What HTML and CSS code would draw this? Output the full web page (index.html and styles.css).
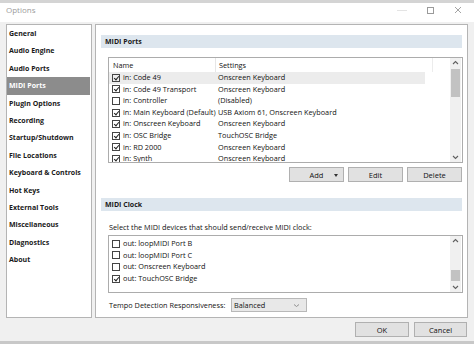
FILE: index.html
```html
<!DOCTYPE html>
<html>
  <head>
    <title>Options</title>
    <meta charset="utf-8">
    <link rel="stylesheet" href="styles.css">
  </head>
  <body>
    <div class="window">
      <div class="titlebar">
        <span class="title">Options</span>
        <div class="controls">
          <svg class="ctl" width="10" height="10" viewBox="0 0 10 10"><line x1="0" y1="5.5" x2="10" y2="5.5" stroke="#e4e4e4" stroke-width="1"/></svg>
          <svg class="ctl" width="10" height="10" viewBox="0 0 10 10"><rect x="2.5" y="2.5" width="6" height="6" fill="none" stroke="#9a9a9a" stroke-width="1"/></svg>
          <svg class="ctl" width="10" height="10" viewBox="0 0 10 10"><path d="M2 2 L8 8 M8 2 L2 8" stroke="#9a9a9a" stroke-width="0.9"/></svg>
        </div>
      </div>

      <div class="main">
        <ul class="nav">
          <li>General</li>
          <li>Audio Engine</li>
          <li>Audio Ports</li>
          <li class="active">MIDI Ports</li>
          <li>Plugin Options</li>
          <li>Recording</li>
          <li>Startup/Shutdown</li>
          <li>File Locations</li>
          <li>Keyboard &amp; Controls</li>
          <li>Hot Keys</li>
          <li>External Tools</li>
          <li>Miscellaneous</li>
          <li>Diagnostics</li>
          <li>About</li>
        </ul>

        <div class="content">
          <div class="band">MIDI Ports</div>

          <div class="listbox ports">
            <div class="rows">
              <div class="list-head">
                <span class="col-name">Name</span>
                <span class="col-set">Settings</span>
                <span class="col-fill"></span>
              </div>
              <div class="row hover"><span class="col-name"><span class="cb on"></span>in: Code 49</span><span class="col-set">Onscreen Keyboard</span></div>
              <div class="row"><span class="col-name"><span class="cb on"></span>in: Code 49 Transport</span><span class="col-set">Onscreen Keyboard</span></div>
              <div class="row"><span class="col-name"><span class="cb"></span>in: Controller</span><span class="col-set">(Disabled)</span></div>
              <div class="row"><span class="col-name"><span class="cb on"></span>in: Main Keyboard (Default)</span><span class="col-set">USB Axiom 61, Onscreen Keyboard</span></div>
              <div class="row"><span class="col-name"><span class="cb on"></span>in: Onscreen Keyboard</span><span class="col-set">Onscreen Keyboard</span></div>
              <div class="row"><span class="col-name"><span class="cb on"></span>in: OSC Bridge</span><span class="col-set">TouchOSC Bridge</span></div>
              <div class="row"><span class="col-name"><span class="cb on"></span>in: RD 2000</span><span class="col-set">Onscreen Keyboard</span></div>
              <div class="row"><span class="col-name"><span class="cb on"></span>in: Synth</span><span class="col-set">Onscreen Keyboard</span></div>
            </div>
            <div class="vscroll">
              <svg class="arrow" width="11" height="10" viewBox="0 0 11 10"><polyline points="3,6 5.5,3.5 8,6" fill="none" stroke="#606060" stroke-width="1.1"/></svg>
              <div class="track"><div class="thumb ports-thumb"></div></div>
              <svg class="arrow" width="11" height="10" viewBox="0 0 11 10"><polyline points="3,4 5.5,6.5 8,4" fill="none" stroke="#606060" stroke-width="1.1"/></svg>
            </div>
          </div>

          <div class="buttons">
            <button class="btn add">Add <span class="caret"></span></button>
            <button class="btn">Edit</button>
            <button class="btn">Delete</button>
          </div>

          <div class="band clock-band">MIDI Clock</div>
          <p class="hint">Select the MIDI devices that should send/receive MIDI clock:</p>

          <div class="listbox clock">
            <div class="rows">
              <div class="row"><span class="col-name wide"><span class="cb"></span>out: loopMIDI Port B</span></div>
              <div class="row"><span class="col-name wide"><span class="cb"></span>out: loopMIDI Port C</span></div>
              <div class="row"><span class="col-name wide"><span class="cb"></span>out: Onscreen Keyboard</span></div>
              <div class="row"><span class="col-name wide"><span class="cb on"></span>out: TouchOSC Bridge</span></div>
            </div>
            <div class="vscroll">
              <svg class="arrow" width="11" height="10" viewBox="0 0 11 10"><polyline points="3,6 5.5,3.5 8,6" fill="none" stroke="#606060" stroke-width="1.1"/></svg>
              <div class="track"><div class="thumb clock-thumb"></div></div>
              <svg class="arrow" width="11" height="10" viewBox="0 0 11 10"><polyline points="3,4 5.5,6.5 8,4" fill="none" stroke="#606060" stroke-width="1.1"/></svg>
            </div>
          </div>

          <div class="tempo">
            <span class="tempo-label">Tempo Detection Responsiveness:</span>
            <div class="select">
              <span>Balanced</span>
              <svg width="7" height="5" viewBox="0 0 7 5"><polyline points="1,1.5 3.5,3.5 6,1.5" fill="none" stroke="#888" stroke-width="0.9"/></svg>
            </div>
          </div>
        </div>
      </div>

      <div class="footer">
        <button class="btn ok">OK</button>
        <button class="btn cancel">Cancel</button>
      </div>
      <div class="bottomstrip"></div>
    </div>
  </body>
</html>
```

FILE: styles.css
```css
body {
  margin: 0;
  background: #f0f0f0;
  color: #111;
  font: 7.3px/1.2 'Open Sans', sans-serif;
}

.window {
  width: 474px;
  height: 344px;
  display: flex;
  flex-direction: column;
  background: #f0f0f0;
  overflow: hidden;
}

.titlebar {
  height: 22px;
  box-sizing: border-box;
  border-top: 3px solid #d4d4d4;
  background: #fff;
  display: flex;
  align-items: flex-start;
  padding: 1px 0 0 6px;
  line-height: 12px;
}

.title {
  color: #9c9c9c;
  font-size: 8px;
}

.controls {
  margin-left: auto;
  display: flex;
  gap: 18px;
  padding-right: 11px;
  margin-top: 1px;
}

.main {
  display: flex;
  gap: 3px;
  margin-top: 2px;
  height: 294px;
  padding: 0 6px;
}

.nav {
  list-style: none;
  margin: 0;
  padding: 0;
  width: 86px;
  box-sizing: border-box;
  border: 1px solid #b4b4b4;
  background: #fff;
}

.nav li {
  height: 17.4px;
  line-height: 17.4px;
  padding-left: 2px;
  margin-right: 1px;
  font-size: 7px;
  font-weight: bold;
  color: #1a1a1a;
  white-space: nowrap;
}

.nav li.active {
  background: #8c8c8c;
  color: #fff;
}

.content {
  flex: 1;
  box-sizing: border-box;
  border: 1px solid #b4b4b4;
  background: #fff;
  padding: 10px 5px 0 5px;
}

.band {
  height: 13px;
  line-height: 13px;
  background: #dde6ee;
  font-size: 7px;
  font-weight: bold;
  color: #1a1a1a;
  padding-left: 4px;
}

.listbox {
  display: flex;
  border: 1px solid #acacac;
  margin: 0 -1px 0 7px;
  box-sizing: border-box;
}

.listbox.ports {
  margin-top: 9px;
  height: 106px;
  overflow: hidden;
}

.rows {
  flex: 1;
  overflow: hidden;
}

.list-head {
  display: flex;
  height: 14px;
  line-height: 14px;
}

.list-head .col-set {
  border-left: 1px solid #e6e6e6;
}

.list-head .col-fill {
  width: 7px;
  border-right: 1px solid #ececec;
}

.row {
  display: flex;
  width: 316px;
  height: 11.6px;
  line-height: 11.6px;
  white-space: nowrap;
}

.row.hover {
  background: #ececec;
}

.col-name {
  width: 106px;
  display: flex;
  align-items: center;
  padding-left: 3px;
  box-sizing: border-box;
}

.list-head .col-name {
  padding-left: 4px;
}

.col-name.wide {
  width: 300px;
}

.col-set {
  width: 210px;
  padding-left: 3px;
  box-sizing: border-box;
}

.cb {
  width: 8px;
  height: 8px;
  box-sizing: border-box;
  border: 1px solid #444;
  margin-right: 3px;
  flex: none;
  position: relative;
}

.cb.on::after {
  content: "";
  position: absolute;
  left: 1.5px;
  top: 0;
  width: 2px;
  height: 4px;
  border: solid #222;
  border-width: 0 1px 1px 0;
  transform: rotate(40deg);
}

.vscroll {
  width: 11px;
  display: flex;
  flex-direction: column;
  background: #f0f0f0;
  margin-right: 1px;
}

.arrow {
  flex: none;
}

.track {
  flex: 1;
}

.thumb {
  background: #c2c2c2;
  margin: 0 1px;
}

.ports-thumb {
  margin-top: 1px;
  height: 28px;
}

.clock-thumb {
  margin-top: 24px;
  height: 11px;
}

.buttons {
  display: flex;
  justify-content: flex-end;
  gap: 4px;
  margin-top: 4px;
}

.btn {
  height: 15px;
  width: 55px;
  background: #e1e1e1;
  border: 1px solid #b0b0b0;
  font: 7.5px 'Open Sans', sans-serif;
  color: #111;
  padding: 0;
}

.btn.add {
  position: relative;
}

.caret {
  position: absolute;
  left: 44px;
  top: 6px;
  width: 0;
  height: 0;
  border-left: 2.5px solid transparent;
  border-right: 2.5px solid transparent;
  border-top: 3px solid #333;
}

.clock-band {
  margin-top: 16px;
}

.hint {
  margin: 10px 0 0 8px;
  line-height: 12px;
}

.listbox.clock {
  margin-top: 2px;
  height: 58px;
}

.listbox.clock .rows {
  padding-top: 2px;
}

.tempo {
  display: flex;
  align-items: center;
  margin-top: 5px;
}

.tempo-label {
  width: 122px;
  padding-left: 8px;
}

.select {
  width: 76px;
  height: 14px;
  box-sizing: border-box;
  border: 1px solid #b8b8b8;
  background: #e8e8e8;
  display: flex;
  align-items: center;
  justify-content: space-between;
  padding: 0 6px 0 2px;
}

.footer {
  display: flex;
  justify-content: flex-end;
  gap: 5px;
  padding: 4px 7px 0 0;
  height: 19px;
}

.btn.ok {
  width: 54px;
}

.btn.cancel {
  width: 53px;
}

.bottomstrip {
  flex: 1;
  background: #c8c8c8;
}
```
